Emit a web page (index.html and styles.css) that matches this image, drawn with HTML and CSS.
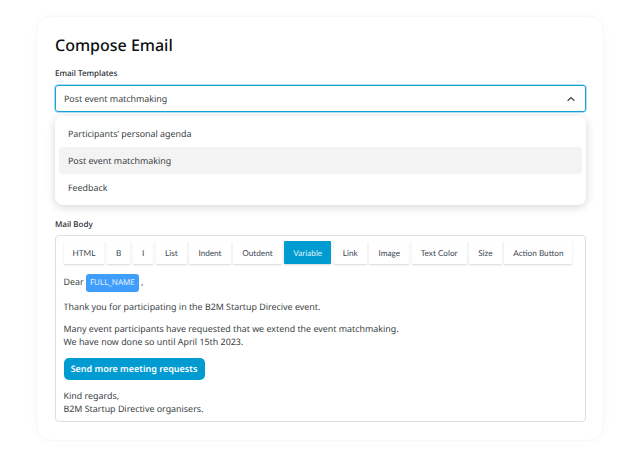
FILE: index.html
```html
<!DOCTYPE html>
<html lang="en">
<head>
<meta charset="utf-8">
<title>Compose Email</title>
<link rel="stylesheet" href="styles.css">
</head>
<body>
<main class="card">
  <h1 class="title">Compose Email</h1>
  <section class="templates">
    <label class="label">Email Templates</label>
    <div class="select">
      <span>Post event matchmaking</span>
      <svg class="chevron" width="10" height="6" viewBox="0 0 10 6" fill="none"><path d="M1.6 4.8L5 1.6 8.4 4.8" stroke="#3a3f45" stroke-width="1.2"/></svg>
    </div>
    <ul class="menu">
      <li class="option">Participants’ personal agenda</li>
      <li class="option active">Post event matchmaking</li>
      <li class="option">Feedback</li>
    </ul>
  </section>
  <section class="body-section">
    <label class="label">Mail Body</label>
    <div class="editor">
      <div class="toolbar">
        <button class="tool">HTML</button>
        <button class="tool">B</button>
        <button class="tool">I</button>
        <button class="tool">List</button>
        <button class="tool">Indent</button>
        <button class="tool">Outdent</button>
        <button class="tool on">Variable</button>
        <button class="tool">Link</button>
        <button class="tool">Image</button>
        <button class="tool">Text Color</button>
        <button class="tool">Size</button>
        <button class="tool">Action Button</button>
      </div>
      <div class="content">
        <p class="dear">Dear <span class="chip">FULL_NAME</span> ,</p>
        <p class="thanks">Thank you for participating in the B2M Startup Direcive event.</p>
        <p class="many">Many event participants have requested that we extend the event matchmaking.<br>We have now done so until April 15th 2023.</p>
        <a class="cta">Send more meeting requests</a>
        <p>Kind regards,<br>B2M Startup Directive organisers.</p>
      </div>
    </div>
  </section>
</main>
</body>
</html>
```
FILE: styles.css
```css
* { box-sizing: border-box; }
html, body { margin: 0; padding: 0; }
body {
  width: 640px;
  height: 457px;
  overflow: hidden;
  background: #fff;
  font-family: "Noto Sans", sans-serif;
  color: #3a3f44;
  padding: 16px 36px 0;
  text-rendering: geometricPrecision;
}
.card {
  width: 568px;
  height: 425px;
  border-radius: 16px;
  background: #fff;
  border: 1px solid #f8f8f8;
  box-shadow: 0 0 12px rgba(0, 0, 0, 0.025);
  padding: 16px 18px 0;
}
.title {
  margin: 0;
  font-size: 16px;
  line-height: 24px;
  font-weight: 500;
  color: #0c0f12;
}
.templates {
  position: relative;
  margin-top: 10px;
  height: 151px;
}
.label {
  display: block;
  font-size: 8px;
  line-height: 14px;
  font-weight: 500;
  color: #24282c;
}
.select {
  margin-top: 4px;
  height: 27px;
  border: 1px solid #13a3d9;
  box-shadow: 0 0 0 0.5px #5cc3e8;
  border-radius: 3px;
  padding: 0 8px;
  display: flex;
  align-items: center;
  justify-content: space-between;
  font-size: 8.9px;
  width: 531px;
}
.chevron { margin-right: 1px; }
.menu {
  position: absolute;
  left: 0;
  width: 531px;
  top: 49px;
  height: 89px;
  margin: 0;
  padding: 4px;
  list-style: none;
  background: #fff;
  border-radius: 8px;
  box-shadow: 0 2px 10px rgba(0, 0, 0, 0.16);
  z-index: 2;
}
.option {
  height: 27px;
  padding: 0 9px;
  border-radius: 4px;
  display: flex;
  align-items: center;
  font-size: 8.9px;
}
.active { background: #f3f3f3; }
.editor {
  margin-top: 3px;
  width: 531px;
  height: 187px;
  border: 1px solid #dcdee0;
  border-radius: 4px;
  padding: 5px 7.5px;
}
.toolbar { display: flex; gap: 2.7px; }
.tool {
  height: 23px;
  padding: 0 9px;
  border: 0;
  border-radius: 1px;
  background: #fff;
  box-shadow: 0 1px 2px rgba(0, 0, 0, 0.16);
  font-family: "Lato", sans-serif;
  font-size: 8.2px;
  color: #3b4753;
  white-space: nowrap;
  flex: none;
  text-rendering: geometricPrecision;
}
.tool.on { background: #009bd0; color: #dff3fa; }
.content { font-size: 8.9px; line-height: 13.5px; }
.content p { margin: 0; }
.content .dear { margin-top: 8px; line-height: 19px; }
.chip {
  display: inline-block;
  height: 18px;
  line-height: 17px;
  padding: 0 4px;
  background: #3f9dfb;
  color: #e6f2ff;
  border-radius: 3px;
  font-size: 8px;
}
.content .thanks { margin-top: 7.5px; }
.content .many { margin-top: 8.5px; }
.cta {
  display: block;
  width: 141px;
  height: 22.5px;
  margin: 9px 0 8.5px;
  background: #009bd0;
  color: #fff;
  border-radius: 5px;
  font-size: 9px;
  font-weight: 600;
  line-height: 22.5px;
  text-align: center;
}
```
